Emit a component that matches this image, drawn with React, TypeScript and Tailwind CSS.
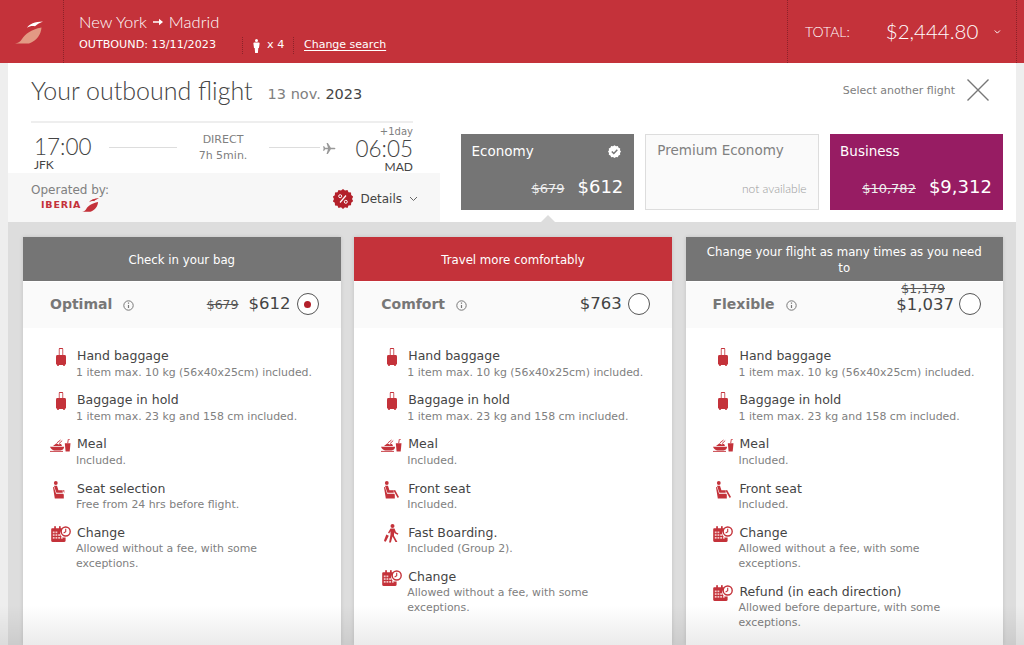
import React from "react";

const V = "font-['DejaVu_Sans',Verdana,sans-serif]";
const L = "font-['Lato',sans-serif]";
const RED = "#c4323a";

function Suitcase({ tall }: { tall?: boolean }) {
  return (
    <svg width="10" height="18" viewBox="0 0 10 18" fill={RED}>
      <path d="M2.800 7V1.300C2.800.6 3.300.1 4 .1h2c.7 0 1.200.5 1.200 1.200V7H6.400V1H3.600v6z" />
      <rect x="0" y={tall ? 6 : 7} width="10" height={tall ? 11 : 10} rx="1.400" />
      <rect x="1.200" y="17" width="1.600" height="1" />
      <rect x="7.200" y="17" width="1.600" height="1" />
    </svg>
  );
}

function Meal() {
  return (
    <svg width="21" height="13" viewBox="0 0 21 13" fill={RED}>
      <path d="M0 7.800h14.200c-.4 2.300-1.700 3.600-3.700 3.600H4.200C2.400 11.400.9 9.800 0 7.800z" />
      <path d="M3 7 6.500 4.200l2 1.400 2.500-.9 1 2.300z" />
      <path d="M7 3.800 10.500 1M9 4.700 12.200 1.600" stroke={RED} strokeWidth=".9" fill="none" />
      <path d="M14.800 4.200h5.700l-.8 8.300h-4.100z" />
      <path d="M17.700 4.200l.6-3.900h1.500" stroke={RED} strokeWidth=".9" fill="none" />
      <rect x="0" y="11.900" width="13" height=".9" />
    </svg>
  );
}

function Seat({ front }: { front?: boolean }) {
  return (
    <svg width="15" height="18" viewBox="0 0 15 18" fill={RED}>
      <circle cx="2.800" cy="2" r="1.900" />
      <path d="M1 4.800h3l1.400 4.400h4.300v2.500H3.400l-.5-1.300z" />
      <path d="M0 6.300l.9-.3 2.200 6.700h6.400c.8 0 1.300.5 1.300 1.300v3.500H1.800z" />
      {front ? <path d="M9.500 9.500l1.600-.4 3.900 7-1.300.8z" /> : <path d="M9.800 9.200h1.500v3z" />}
    </svg>
  );
}

function Runner() {
  return (
    <svg width="15" height="19" viewBox="0 0 15 19" fill={RED}>
      <circle cx="8.500" cy="2.100" r="2" />
      <path d="M6.500 4.600h4l1.500 3.700 2.400 1.300-.6 1.100-3.300-1.500-.5-1.200v3.700l3.400 6.300h-1.900L8.500 12.500 6.900 18.500H5.100L6.500 10.500V7.300L5.200 9.400 4 8.800z" />
      <path d="M2.300 10.500l2.500 1.300-2.500 5c-.4.800-1 1-1.600.7-.6-.3-.8-1-.4-1.700z" />
    </svg>
  );
}

function Calendar() {
  return (
    <svg width="20" height="16" viewBox="0 0 20 16" fill={RED}>
      <path d="M.2 3.500C.2 2.700.7 2.200 1.500 2.200h9.700v1.700c-1.400 1-2.200 2.400-2 4.100.1 1.500 1 2.800 2.400 3.500h3v3.200c0 .7-.5 1.200-1.200 1.200H1.500c-.8 0-1.300-.5-1.300-1.200z" />
      <rect x="3.200" y=".2" width="1.700" height="3.400" />
      <rect x="8" y=".2" width="1.700" height="3.400" />
      <g fill="#f3c9c9">
        <rect x="1.800" y="5.500" width="1.800" height="1.700" />
        <rect x="4.500" y="5.500" width="1.800" height="1.700" />
        <rect x="1.800" y="8.200" width="1.800" height="1.700" />
        <rect x="4.500" y="8.200" width="1.800" height="1.700" />
        <rect x="7.200" y="8.200" width="1.800" height="1.700" />
        <rect x="1.800" y="11" width="1.800" height="1.700" />
        <rect x="4.500" y="11" width="1.800" height="1.700" />
        <rect x="7.200" y="11" width="1.800" height="1.700" />
        <rect x="9.900" y="11" width="1.800" height="1.700" />
      </g>
      <circle cx="14.700" cy="5.500" r="4.500" fill="#fff" stroke={RED} strokeWidth="1.400" />
      <path d="M14.700 2.800v2.900l-2.100 1.200" stroke={RED} strokeWidth="1.100" fill="none" />
    </svg>
  );
}

function Info() {
  return (
    <svg width="11" height="11" viewBox="0 0 11 11" fill="none" stroke="#777">
      <circle cx="5.500" cy="5.500" r="4.700" />
      <path d="M5.500 5v3M5.500 2.600v1.200" strokeWidth="1.200" />
    </svg>
  );
}

function Wing({ fill = "#e39a84", top = "#fff", w = 28 }: { fill?: string; top?: string; w?: number }) {
  return (
    <svg width={w} height={(w * 23) / 28} viewBox="0 0 28 23">
      <path d="M12 6.800C14 3 20 .8 28 .5c-4 1.700-6 2.900-8 4.700C17 4.600 14.500 5.200 12 6.800z" fill={top} />
      <path d="M0 22.500C3 22 5 21 7 18 10 13 16 8.500 26.500 6.500 26 13 22 20 14 22.500z" fill={fill} />
    </svg>
  );
}

type Row = { icon: React.ReactNode; title: string; sub: string[] };

const hand: Row = { icon: <Suitcase />, title: "Hand baggage", sub: ["1 item max. 10 kg (56x40x25cm) included."] };
const hold: Row = { icon: <Suitcase tall />, title: "Baggage in hold", sub: ["1 item max. 23 kg and 158 cm included."] };
const meal: Row = { icon: <Meal />, title: "Meal", sub: ["Included."] };
const front: Row = { icon: <Seat front />, title: "Front seat", sub: ["Included."] };
const change: Row = {
  icon: <Calendar />,
  title: "Change",
  sub: ["Allowed without a fee, with some", "exceptions."],
};

const cards = [
  {
    head: ["Check in your bag"],
    headBg: "bg-[#757575]",
    name: "Optimal",
    price: "$612",
    old: "$679",
    stacked: false,
    selected: true,
    rows: [
      hand,
      hold,
      meal,
      { icon: <Seat />, title: "Seat selection", sub: ["Free from 24 hrs before flight."] },
      change,
    ],
  },
  {
    head: ["Travel more comfortably"],
    headBg: "bg-[#c4323a]",
    name: "Comfort",
    price: "$763",
    old: "",
    stacked: false,
    selected: false,
    rows: [
      hand,
      hold,
      meal,
      front,
      { icon: <Runner />, title: "Fast Boarding.", sub: ["Included (Group 2)."] },
      change,
    ],
  },
  {
    head: ["Change your flight as many times as you need", "to"],
    headBg: "bg-[#757575]",
    name: "Flexible",
    price: "$1,037",
    old: "$1,179",
    stacked: true,
    selected: false,
    rows: [
      hand,
      hold,
      meal,
      front,
      change,
      {
        icon: <Calendar />,
        title: "Refund (in each direction)",
        sub: ["Allowed before departure, with some", "exceptions."],
      },
    ],
  },
];

function Radio({ on }: { on: boolean }) {
  return (
    <span className="flex h-[22px] w-[22px] shrink-0 items-center justify-center rounded-full border border-[#555] bg-white">
      {on && <span className="h-[7px] w-[7px] rounded-full bg-[#b3202a]" />}
    </span>
  );
}

function Card({ c }: { c: (typeof cards)[number] }) {
  return (
    <div className="flex w-[317.500px] flex-col bg-white shadow-[0_0_4px_rgba(0,0,0,0.12)]">
      <div className={`flex h-[44px] flex-col items-center justify-center pt-[2px] text-center text-[11.750px] leading-[16px] text-white ${c.headBg}`}>
        {c.head.map((h) => (
          <div key={h}>{h}</div>
        ))}
      </div>
      <div className="mt-px flex h-[46px] items-center bg-[#fafafa] pb-[2px] pl-[27px] pr-[22px]">
        <span className="text-[14px] font-bold text-[#777]">{c.name}</span>
        <span className="ml-[11px] mt-[2px] flex"><Info /></span>
        <span className="flex-1" />
        {c.stacked ? (
          <span className="mr-[5px] mt-[-12px] flex flex-col items-end">
            <span className="mr-[9px] text-[12.500px] leading-[14px] text-[#555] line-through">{c.old}</span>
            <span className="text-[16.500px] leading-[18px] text-[#444]">{c.price}</span>
          </span>
        ) : (
          <span className="mr-[6px] flex items-baseline text-[#444]">
            {c.old && <span className="mr-[10px] text-[12.500px] text-[#555] line-through">{c.old}</span>}
            <span className="text-[16.500px]">{c.price}</span>
          </span>
        )}
        <Radio on={c.selected} />
      </div>
      <div className="flex flex-col gap-[11.700px] pt-[19px]">
        {c.rows.map((r) => (
          <div key={r.title} className="flex">
            <div className="ml-[24px] flex h-[20px] w-[28px] shrink-0 items-center justify-center pr-[1px]">{r.icon}</div>
            <div className="ml-px">
              <div className="ml-px text-[12.500px] leading-[17.500px] text-[#444]">{r.title}</div>
              {r.sub.map((s) => (
                <div key={s} className="text-[10.900px] leading-[15px] text-[#808080]">{s}</div>
              ))}
            </div>
          </div>
        ))}
      </div>
    </div>
  );
}

function Tile({ name, old, price, bg, check }: { name: string; old: string; price: string; bg: string; check?: boolean }) {
  return (
    <div className={`flex h-[76px] w-[173.300px] flex-col justify-between pb-[12px] pl-[10.500px] pr-[11px] text-white ${bg}`}>
      <div className="flex items-center justify-between pt-[7px] text-[13.500px] leading-[20px]">
        <span>{name}</span>
        {check && (
          <svg width="13" height="13" viewBox="0 0 13 13" className="mr-[2px]">
            <path d="M6.500.3l1.500 1 1.800-.2.800 1.600 1.600.8-.2 1.800 1 1.200-1 1.500.2 1.800-1.600.8-.8 1.600-1.800-.2-1.500 1-1.500-1-1.800.2-.8-1.600-1.600-.8.2-1.800-1-1.500 1-1.200-.2-1.800 1.600-.8.8-1.600 1.800.2z" fill="#fff" />
            <path d="M3.800 6.500l2 2 3.500-3.700" stroke="#757575" strokeWidth="1.500" fill="none" />
          </svg>
        )}
      </div>
      <div className="flex items-baseline justify-end">
        <span className="mr-[13px] text-[13px] text-[#eee] line-through">{old}</span>
        <span className="text-[18px] leading-[22px]">{price}</span>
      </div>
    </div>
  );
}

export default function App() {
  return (
    <div className={`relative h-[645px] w-[1024px] overflow-hidden bg-[#eeeeee] ${V}`}>
      {/* top bar */}
      <div className="flex h-[63px] bg-[#c4323a] text-white">
        <div className="flex w-[64px] shrink-0 items-center border-r border-dotted border-[#8d2229] pl-[15px] pt-[1px]">
          <Wing />
        </div>
        <div className="flex flex-1 flex-col pl-[15px]">
          <div className={`mt-[11px] flex items-center text-[16.500px] font-light leading-[22px] ${L}`}>
            <span>New York</span>
            <span className="mx-[6px] flex">
              <svg width="10" height="8" viewBox="0 0 10 8" fill="#fff"><path d="M0 3.300h6V.8L10 4 6 7.200V4.700H0z" /></svg>
            </span>
            <span>Madrid</span>
          </div>
          <div className="mt-[4px] flex h-[17px] items-center text-[11.200px]">
            <span className="w-[163px] shrink-0">OUTBOUND: 13/11/2023</span>
            <span className="flex h-full w-[52px] shrink-0 items-center border-x border-dotted border-[#8d2229] pl-[10px]">
              <svg width="7" height="14" viewBox="0 0 7 14" fill="#fff" className="mr-[7px]">
                <circle cx="3.500" cy="1.600" r="1.500" />
                <path d="M1.500 3.600h4c.7 0 1.100.4 1.100 1L6 9H5.300l-.4 5H2.100l-.4-5H1L.4 4.600c0-.6.400-1 1.100-1z" />
              </svg>
              x 4
            </span>
            <span className="ml-[10px] text-[11px] underline underline-offset-2">Change search</span>
          </div>
        </div>
        <div className="flex w-[230px] shrink-0 items-center border-x border-dotted border-[#8d2229] pl-[17px] pr-[15px]">
          <span className={`text-[14px] font-light ${L}`}>TOTAL:</span>
          <span className={`ml-[36px] text-[20.500px] font-light ${L}`}>$2,444.80</span>
          <svg width="9" height="6" viewBox="0 0 9 6" fill="none" stroke="#fff" strokeWidth="1.300" className="ml-[16px]"><path d="M1 1l3.500 3.500L8 1" /></svg>
        </div>
        <div className="w-[7px] shrink-0" />
      </div>

      {/* white sheet */}
      <div className="mx-[8px] bg-white">
        <div className="flex h-[58px] items-center pb-[3px] pl-[23px] pr-[26px]">
          <span className={`mb-[2px] text-[25px] font-light leading-[36px] text-[#444] ${L}`}>Your outbound flight</span>
          <span className="ml-[15px] mt-[8px] text-[14.500px] text-[#808080]">13 nov. <span className="text-[#444]">2023</span></span>
          <span className="flex-1" />
          <span className="mt-[2px] text-[11px] text-[#808080]">Select another flight</span>
          <svg width="24" height="24" viewBox="0 0 24 24" stroke="#777" strokeWidth="1.400" className="mb-[2px] ml-[11px]"><path d="M1.500 1.500l21 21M22.500 1.500l-21 21" /></svg>
        </div>

        <div className="flex h-[101px]">
          <div className="flex w-[432px] shrink-0 flex-col">
            <div className="ml-[23px] mr-[27px] flex h-[52px] items-start border-t-2 border-[#eee] pl-[3px]">
              <div className="mt-[13px] flex w-[75px] shrink-0 flex-col">
                <span className={`text-[22.500px] font-light leading-[22px] text-[#444] ${L}`}>17:00</span>
                <span className={`mt-[1px] text-[12px] leading-[12px] text-[#444] ${L}`}>JFK</span>
              </div>
              <div className="mt-[24px] h-px w-[68px] shrink-0 bg-[#ddd]" />
              <div className="mt-[9px] flex w-[92px] shrink-0 flex-col items-center text-[11px] leading-[16px] text-[#808080]">
                <span>DIRECT</span>
                <span>7h 5min.</span>
              </div>
              <div className="mt-[24px] h-px w-[51px] shrink-0 bg-[#ddd]" />
              <svg width="13" height="13" viewBox="0 0 24 24" fill="#999" className="ml-[3px] mt-[19px] shrink-0 rotate-90"><path d="M12 1c1 0 1.600 1.300 1.600 3v5.500L22 15v2.500l-8.400-2.700V20l2.400 1.800V24L12 22.800 8 24v-2.200l2.400-1.800v-5.200L2 17.500V15l8.400-5.500V4c0-1.700.600-3 1.600-3z" /></svg>
              <div className="flex flex-1 flex-col items-end">
                <span className="mt-[3px] text-[10px] leading-[11px] text-[#808080]">+1day</span>
                <span className={`mt-[1px] text-[22.500px] font-light leading-[22px] text-[#444] ${L}`}>06:05</span>
                <span className={`mt-[1px] text-[12px] leading-[12px] text-[#444] ${L}`}>MAD</span>
              </div>
            </div>
            <div className="flex h-[49px] items-center bg-[#f7f7f7] pl-[23px] pr-[22px]">
              <div className="flex flex-col">
                <span className="text-[12px] leading-[15px] text-[#808080]">Operated by:</span>
                <span className="ml-[10px] flex items-center">
                  <span className="text-[9.500px] font-bold leading-[14px] tracking-[0.8px] text-[#c4323a]">IBERIA</span>
                  <span className="ml-[1px] flex"><Wing fill={RED} top={RED} w={17} /></span>
                </span>
              </div>
              <span className="flex-1" />
              <svg width="20" height="20" viewBox="0 0 20 20" className="mt-[2px]">
                <path d="M10 0l2 1.600L14.500.9l1 2.300 2.500.3.200 2.600 2 1.500-1.200 2.300 1.200 2.300-2 1.500-.2 2.600-2.500.3-1 2.300-2.500-.7L10 20l-2-1.700-2.500.7-1-2.300-2.500-.3-.2-2.600-2-1.500L1 10 -.2 7.700l2-1.500L2 3.500l2.500-.3 1-2.300L8 1.600z" fill="#b3202a" />
                <path d="M7 13.500l6-7" stroke="#fff" strokeWidth="1.200" />
                <circle cx="7.200" cy="7.200" r="1.500" fill="none" stroke="#fff" />
                <circle cx="12.800" cy="12.800" r="1.500" fill="none" stroke="#fff" />
              </svg>
              <span className="ml-[7px] mt-[2px] text-[12px] text-[#444]">Details</span>
              <svg width="9" height="6" viewBox="0 0 9 6" fill="none" stroke="#666" className="ml-[7px] mt-[3px]"><path d="M1 1l3.500 3.500L8 1" /></svg>
            </div>
          </div>
          <div className="flex flex-1 gap-[11px] pl-[21px] pt-[13px]">
            <div className="flex flex-col items-center">
              <div className="border-t-[3px] border-[#5c5c5c]">
                <div className="mt-[-3px]"><Tile name="Economy" old="$679" price="$612" bg="bg-[#757575]" check /></div>
              </div>
              <div className="mt-[5px] h-0 w-0 border-x-[7px] border-b-[7px] border-x-transparent border-b-[#dddddd]" />
            </div>
            <div className="flex h-[76px] w-[173.300px] flex-col justify-between border border-[#ddd] bg-[#fafafa] px-[11px] pb-[12px] text-[#808080]">
              <span className="pt-[5px] text-[13.500px] leading-[20px]">Premium Economy</span>
              <span className={`self-end text-[12px] font-light leading-[16px] text-[#999] ${L}`}>not available</span>
            </div>
            <Tile name="Business" old="$10,782" price="$9,312" bg="bg-[#971c63]" />
          </div>
        </div>
      </div>

      {/* fare cards */}
      <div className="mx-[8px] flex h-[423px] gap-[13.750px] bg-[#dddddd] pl-[15px] pt-[15px]">
        {cards.map((c) => (
          <Card key={c.name} c={c} />
        ))}
      </div>

      {/* bottom fade over the page */}
      <div className="pointer-events-none absolute inset-x-0 bottom-0 h-[40px] bg-gradient-to-b from-transparent to-[rgba(0,0,0,0.08)]" />
    </div>
  );
}
